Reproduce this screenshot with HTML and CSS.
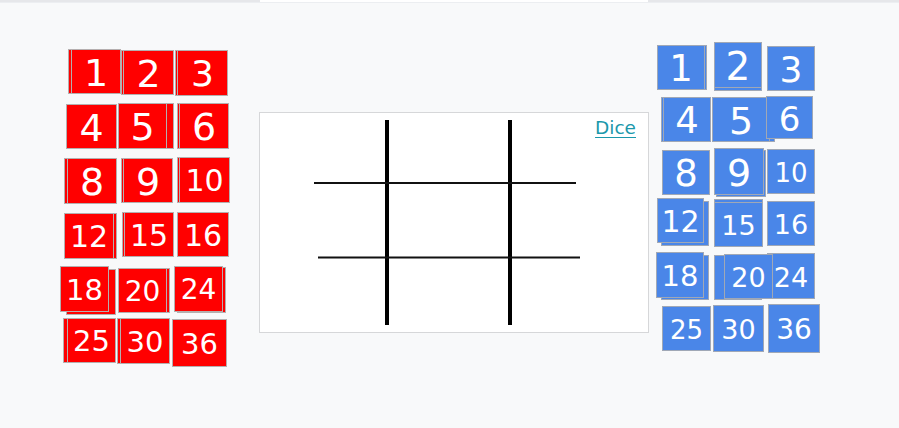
FILE: index.html
```html
<!DOCTYPE html>
<html lang="en">
<head>
<meta charset="utf-8">
<title>Board</title>
<link rel="stylesheet" href="styles.css">
</head>
<body>
<div class="topbar">
  <div class="seg seg-left"></div>
  <div class="seg seg-mid"></div>
  <div class="seg seg-right"></div>
</div>
<main class="canvas">
  <!-- red pile -->
  <div class="card red back" style="--x:68px;--y:46px;--w:50px;--h:45px"></div>
  <div class="card red" style="--x:71px;--y:46px;--w:50px;--h:45px;--f:38px">1</div>
  <div class="card red back" style="--x:121px;--y:47px;--w:51px;--h:45px"></div>
  <div class="card red" style="--x:123px;--y:47px;--w:51px;--h:45px;--f:38px">2</div>
  <div class="card red back" style="--x:175px;--y:47px;--w:51px;--h:46px"></div>
  <div class="card red" style="--x:177px;--y:47px;--w:51px;--h:46px;--f:36px">3</div>
  <div class="card red" style="--x:66px;--y:101px;--w:51px;--h:45px;--f:38px">4</div>
  <div class="card red back" style="--x:125px;--y:100px;--w:49px;--h:46px"></div>
  <div class="card red" style="--x:118px;--y:100px;--w:49px;--h:46px;--f:38px">5</div>
  <div class="card red back" style="--x:177px;--y:100px;--w:50px;--h:46px"></div>
  <div class="card red" style="--x:179px;--y:100px;--w:50px;--h:46px;--f:38px">6</div>
  <div class="card red back" style="--x:64px;--y:155px;--w:50px;--h:46px"></div>
  <div class="card red" style="--x:67px;--y:155px;--w:50px;--h:46px;--f:38px">8</div>
  <div class="card red back" style="--x:121px;--y:155px;--w:50px;--h:45px"></div>
  <div class="card red" style="--x:123px;--y:155px;--w:50px;--h:45px;--f:38px">9</div>
  <div class="card red back" style="--x:177px;--y:154px;--w:51px;--h:46px"></div>
  <div class="card red" style="--x:179px;--y:154px;--w:51px;--h:46px;--f:30px">10</div>
  <div class="card red back" style="--x:67px;--y:210px;--w:50px;--h:46px"></div>
  <div class="card red" style="--x:64px;--y:210px;--w:50px;--h:46px;--f:30px">12</div>
  <div class="card red back" style="--x:122px;--y:209px;--w:50px;--h:45px"></div>
  <div class="card red" style="--x:124px;--y:209px;--w:50px;--h:45px;--f:30px">15</div>
  <div class="card red" style="--x:177px;--y:209px;--w:52px;--h:45px;--f:30px">16</div>
  <div class="card red back" style="--x:66px;--y:266px;--w:50px;--h:46px"></div>
  <div class="card red" style="--x:60px;--y:263px;--w:49px;--h:46px;--f:29px">18</div>
  <div class="card red back" style="--x:121px;--y:265px;--w:49px;--h:45px"></div>
  <div class="card red" style="--x:118px;--y:265px;--w:49px;--h:45px;--f:28px">20</div>
  <div class="card red back" style="--x:177px;--y:264px;--w:49px;--h:46px"></div>
  <div class="card red" style="--x:174px;--y:263px;--w:49px;--h:46px;--f:28px">24</div>
  <div class="card red back" style="--x:63px;--y:315px;--w:49px;--h:45px"></div>
  <div class="card red" style="--x:67px;--y:315px;--w:49px;--h:45px;--f:29px">25</div>
  <div class="card red back" style="--x:117px;--y:315px;--w:50px;--h:46px"></div>
  <div class="card red" style="--x:120px;--y:315px;--w:50px;--h:46px;--f:29px">30</div>
  <div class="card red" style="--x:172px;--y:316px;--w:55px;--h:48px;--f:29px">36</div>

  <!-- board -->
  <section class="board">
    <svg class="grid" viewBox="0 0 388 219" width="388" height="219" aria-hidden="true">
      <line x1="127" y1="7" x2="127" y2="212" stroke="#000" stroke-width="4"/>
      <line x1="250" y1="7" x2="250" y2="212" stroke="#000" stroke-width="4"/>
      <line x1="54" y1="70" x2="316" y2="70" stroke="#111" stroke-width="2"/>
      <line x1="58" y1="144.5" x2="320" y2="144.5" stroke="#111" stroke-width="2"/>
    </svg>
    <a class="dice" href="#">Dice</a>
  </section>

  <!-- blue pile -->
  <div class="card blue back" style="--x:659px;--y:42px;--w:48px;--h:45px"></div>
  <div class="card blue" style="--x:657px;--y:42px;--w:48px;--h:45px;--f:37px">1</div>
  <div class="card blue back" style="--x:714px;--y:42px;--w:48px;--h:46px"></div>
  <div class="card blue" style="--x:714px;--y:39px;--w:48px;--h:46px;--f:39px">2</div>
  <div class="card blue" style="--x:767px;--y:43px;--w:48px;--h:45px;--f:36px">3</div>
  <div class="card blue back" style="--x:661px;--y:94px;--w:48px;--h:45px"></div>
  <div class="card blue" style="--x:663px;--y:94px;--w:48px;--h:45px;--f:37px">4</div>
  <div class="card blue back" style="--x:718px;--y:94px;--w:57px;--h:45px"></div>
  <div class="card blue" style="--x:712px;--y:94px;--w:58px;--h:45px;--f:38px">5</div>
  <div class="card blue" style="--x:766px;--y:93px;--w:47px;--h:43px;--f:34px">6</div>
  <div class="card blue" style="--x:662px;--y:147px;--w:48px;--h:45px;--f:37px">8</div>
  <div class="card blue back" style="--x:716px;--y:147px;--w:50px;--h:47px"></div>
  <div class="card blue" style="--x:714px;--y:145px;--w:50px;--h:47px;--f:38px">9</div>
  <div class="card blue" style="--x:767px;--y:146px;--w:48px;--h:45px;--f:26px">10</div>
  <div class="card blue back" style="--x:661px;--y:198px;--w:48px;--h:45px"></div>
  <div class="card blue" style="--x:657px;--y:195px;--w:47px;--h:45px;--f:30px">12</div>
  <div class="card blue back" style="--x:714px;--y:196px;--w:49px;--h:45px"></div>
  <div class="card blue" style="--x:714px;--y:199px;--w:49px;--h:45px;--f:27px">15</div>
  <div class="card blue" style="--x:767px;--y:198px;--w:48px;--h:45px;--f:27px">16</div>
  <div class="card blue back" style="--x:661px;--y:252px;--w:48px;--h:45px"></div>
  <div class="card blue" style="--x:656px;--y:249px;--w:48px;--h:46px;--f:29px">18</div>
  <div class="card blue" style="--x:767px;--y:250px;--w:48px;--h:46px;--f:27px">24</div>
  <div class="card blue back" style="--x:714px;--y:252px;--w:48px;--h:45px"></div>
  <div class="card blue" style="--x:724px;--y:251px;--w:49px;--h:45px;--f:27px">20</div>
  <div class="card blue" style="--x:662px;--y:303px;--w:49px;--h:45px;--f:26px">25</div>
  <div class="card blue" style="--x:713px;--y:302px;--w:51px;--h:47px;--f:27px">30</div>
  <div class="card blue" style="--x:768px;--y:301px;--w:52px;--h:49px;--f:28px">36</div>
</main>
</body>
</html>
```
FILE: styles.css
```css
* { box-sizing: border-box; }

html, body {
  margin: 0;
  padding: 0;
  background: #f8f9fa;
  font-family: "DejaVu Sans", "Liberation Sans", sans-serif;
}

body {
  width: 899px;
  height: 428px;
  overflow: hidden;
}

.topbar {
  display: flex;
  height: 3px;
  border-bottom: 1px solid #eceef1;
}

.seg { height: 2px; }
.seg-left { width: 260px; background: #e6e7ea; }
.seg-mid { width: 388px; background: #ffffff; }
.seg-right { flex: 1; background: #e6e7ea; }

.canvas {
  position: relative;
  height: 425px;
}

.card {
  position: absolute;
  left: var(--x);
  top: var(--y);
  width: var(--w);
  height: var(--h);
  display: flex;
  align-items: center;
  justify-content: center;
  font-size: var(--f, 30px);
  line-height: 1;
  color: #ffffff;
  padding-top: 2px;
}

.red {
  background: #ff0000;
  border: 1px solid #b5afaf;
}

.blue {
  background: #4a86e8;
  border: 1px solid #a0a8b6;
}

.board {
  position: absolute;
  left: 259px;
  top: 109px;
  width: 390px;
  height: 221px;
  background: #ffffff;
  border: 1px solid #d6d7d9;
  padding: 5px 12px 0 0;
  display: flex;
  justify-content: flex-end;
  align-items: flex-start;
}

.grid {
  position: absolute;
  left: 0;
  top: 0;
}

.dice {
  position: relative;
  font-size: 18.5px;
  line-height: 20px;
  color: #1b98ab;
  text-decoration: underline;
  text-underline-offset: 3px;
}
```
